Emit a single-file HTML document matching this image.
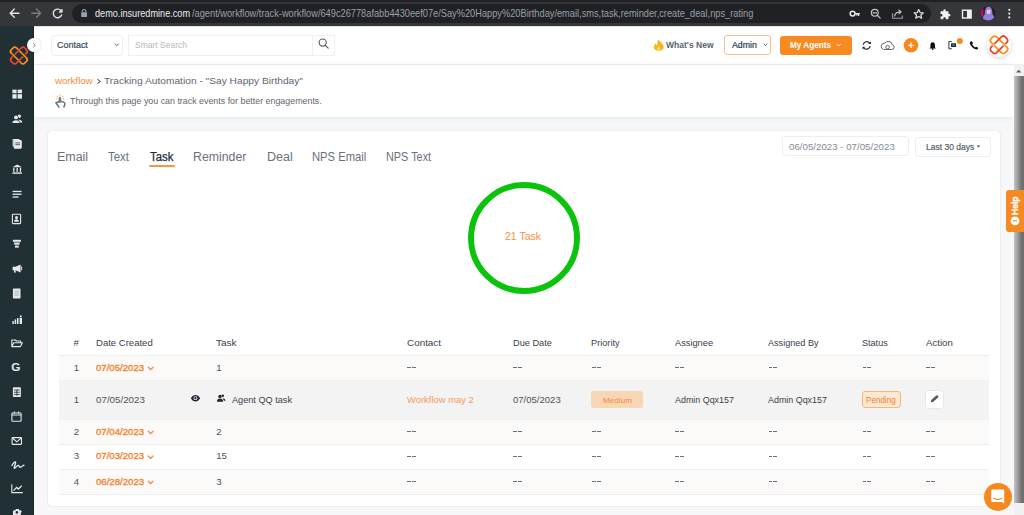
<!DOCTYPE html>
<html><head><meta charset="utf-8">
<style>
*{margin:0;padding:0;box-sizing:border-box}
html,body{width:1024px;height:515px;overflow:hidden;background:#f6f7f9;font-family:"Liberation Sans",sans-serif}
.a{position:absolute}
.t{position:absolute;white-space:nowrap;line-height:1;transform-origin:0 0;font-family:"Liberation Sans",sans-serif}
svg{position:absolute;overflow:visible}
</style></head><body>
<!-- browser chrome -->
<div class="a" style="left:0;top:0;width:1024px;height:26px;background:#35363a"></div>
<div class="a" style="left:0;top:0;width:1024px;height:2px;background:#202124"></div>
<div class="a" style="left:72px;top:4px;width:859px;height:19px;border-radius:10px;background:#202124"></div>
<!-- sidebar -->
<div class="a" style="left:0;top:26px;width:34px;height:489px;background:#213035"></div><div class="a" style="left:33px;top:26px;width:1px;height:489px;background:#182428"></div>
<!-- header -->
<div class="a" style="left:34px;top:26px;width:990px;height:39px;background:#fff;border-bottom:1px solid #eceef1"></div><div class="a" style="left:34px;top:26px;width:990px;height:1px;background:#e2e2e2"></div>
<!-- breadcrumb panel -->
<div class="a" style="left:34px;top:65px;width:980px;height:52px;background:#fff;box-shadow:0 1px 5px rgba(0,0,0,.07)"></div>
<!-- scrollbar -->
<div class="a" style="left:1014px;top:64px;width:10px;height:451px;background:#f1f1f1"></div>
<div class="a" style="left:1014px;top:76px;width:10px;height:427px;background:linear-gradient(to right,#c4c4c4,#9a9a9a 40%,#727272 75%,#6e6e6e)"></div>
<!-- card -->
<div class="a" style="left:47px;top:129.5px;width:953.5px;height:377px;background:#fff;border-radius:5px;border:1px solid #eeeff0"></div>
<!-- controls header -->
<div class="a" style="left:50.5px;top:35px;width:72.5px;height:20.5px;border:1px solid #edf0f3;border-radius:3px;background:#fff"></div>
<div class="a" style="left:128px;top:35px;width:185px;height:20.5px;border:1px solid #edf0f3;background:#fff"></div>
<div class="a" style="left:312px;top:35px;width:23px;height:20.5px;border:1px solid #edf0f3;background:#fff"></div>
<div class="a" style="left:724px;top:35px;width:47px;height:20px;border:1px solid #f9c08f;border-radius:3px;background:#fff"></div>
<div class="a" style="left:780px;top:36px;width:72px;height:19px;border-radius:3px;background:#f78b22"></div>
<!-- date controls -->
<div class="a" style="left:782px;top:136px;width:127px;height:20px;border:1px solid #eceef0;border-radius:3px"></div>
<div class="a" style="left:915px;top:137px;width:76px;height:20px;border:1px solid #eceef0;border-radius:3px"></div>
<!-- tab underline -->
<div class="a" style="left:149px;top:165px;width:26px;height:2px;background:#f59844;border-radius:1px"></div>
<!-- circle -->
<div class="a" style="left:468px;top:182px;width:112px;height:112px;border-radius:50%;border:6.8px solid #0bc30b"></div>
<!-- table -->
<div class="a" style="left:58.5px;top:355px;width:930px;height:1px;background:#eceef0"></div>
<div class="a" style="left:58.5px;top:356px;width:930px;height:24px;background:#fbfaf9"></div>
<div class="a" style="left:58.5px;top:380px;width:930px;height:1px;background:#eceef0"></div>
<div class="a" style="left:58.5px;top:381px;width:930px;height:38px;background:#f3f3f3"></div>
<div class="a" style="left:58.5px;top:419px;width:930px;height:1px;background:#eceef0"></div>
<div class="a" style="left:58.5px;top:420px;width:930px;height:24px;background:#fbfaf9"></div>
<div class="a" style="left:58.5px;top:444px;width:930px;height:1px;background:#eceef0"></div>
<div class="a" style="left:58.5px;top:469px;width:930px;height:1px;background:#eceef0"></div>
<div class="a" style="left:58.5px;top:470px;width:930px;height:24px;background:#fbfaf9"></div>
<div class="a" style="left:58.5px;top:494px;width:930px;height:1px;background:#eceef0"></div>
<!-- badges -->
<div class="a" style="left:591px;top:391px;width:52px;height:17px;border-radius:2.5px;background:#f7d6b5"></div>
<div class="a" style="left:862px;top:390.6px;width:39px;height:17.4px;border-radius:3px;background:#fde8d3;border:1px solid #f8b678"></div>
<div class="a" style="left:926px;top:391px;width:17px;height:17px;border-radius:2px;background:#fff;box-shadow:0 0 2px rgba(0,0,0,.15)"></div>
<!-- help tab -->
<div class="a" style="left:1006px;top:190px;width:18px;height:42px;border-radius:3px 0 0 3px;background:#f58a22"></div>
<!-- chat button -->
<div class="a" style="left:983.7px;top:482.5px;width:28.6px;height:28.6px;border-radius:50%;background:#f5891f"></div>
<div class="t" style="left:95.20px;top:8.00px;font-size:10.60px;color:#e8eaed;font-weight:400;transform:scaleX(0.8632);">demo.insuredmine.com</div>
<div class="t" style="left:191.60px;top:8.00px;font-size:10.60px;color:#9aa0a6;font-weight:400;transform:scaleX(0.8729);">/agent/workflow/track-workflow/649c26778afabb4430eef07e/Say%20Happy%20Birthday/email,sms,task,reminder,create_deal,nps_rating</div>
<div class="t" style="left:56.90px;top:42.00px;font-size:8.28px;color:#3d4b5c;font-weight:400;transform:scaleX(1.0826);-webkit-text-stroke:0.2px #3d4b5c;">Contact</div>
<div class="t" style="left:134.70px;top:42.00px;font-size:8.28px;color:#b8b8b8;font-weight:400;transform:scaleX(1.0308);">Smart Search</div>
<div class="t" style="left:665.60px;top:41.00px;font-size:8.43px;color:#5a626d;font-weight:700;transform:scaleX(1.0132);">What's New</div>
<div class="t" style="left:731.60px;top:41.00px;font-size:8.87px;color:#2c3a4a;font-weight:400;transform:scaleX(0.9927);-webkit-text-stroke:0.2px #2c3a4a;">Admin</div>
<div class="t" style="left:790.40px;top:41.00px;font-size:8.58px;color:#ffffff;font-weight:700;transform:scaleX(0.9510);">My Agents</div>
<div class="t" style="left:55.18px;top:76.00px;font-size:9.90px;color:#f58a3c;font-weight:400;transform:scaleX(0.9807);">workflow</div>
<div class="t" style="left:104.00px;top:76.00px;font-size:9.88px;color:#5d6570;font-weight:400;transform:scaleX(1.0323);">Tracking Automation - "Say Happy Birthday"</div>
<div class="t" style="left:69.60px;top:97.00px;font-size:8.58px;color:#5f6670;font-weight:400;transform:scaleX(1.0332);">Through this page you can track events for better engagements.</div>
<div class="t" style="left:56.78px;top:151.00px;font-size:12.21px;color:#6a7079;font-weight:400;transform:scaleX(1.0185);">Email</div>
<div class="t" style="left:108.20px;top:151.00px;font-size:12.21px;color:#6a7079;font-weight:400;transform:scaleX(0.9362);">Text</div>
<div class="t" style="left:150.00px;top:151.00px;font-size:12.21px;color:#1d2a3a;font-weight:400;transform:scaleX(0.9321);-webkit-text-stroke:0.25px #1d2a3a;">Task</div>
<div class="t" style="left:193.49px;top:151.00px;font-size:12.21px;color:#6a7079;font-weight:400;transform:scaleX(1.0102);">Reminder</div>
<div class="t" style="left:266.88px;top:151.00px;font-size:12.21px;color:#6a7079;font-weight:400;transform:scaleX(1.0232);">Deal</div>
<div class="t" style="left:311.78px;top:151.00px;font-size:12.21px;color:#6a7079;font-weight:400;transform:scaleX(0.9211);">NPS Email</div>
<div class="t" style="left:385.61px;top:151.00px;font-size:12.21px;color:#6a7079;font-weight:400;transform:scaleX(0.8907);">NPS Text</div>
<div class="t" style="left:789.00px;top:142.00px;font-size:9.88px;color:#858b93;font-weight:400;transform:scaleX(0.9831);">06/05/2023 - 07/05/2023</div>
<div class="t" style="left:925.70px;top:142.00px;font-size:9.88px;color:#555b63;font-weight:400;transform:scaleX(0.8616);-webkit-text-stroke:0.2px #555b63;">Last 30 days</div>
<div class="t" style="left:505.40px;top:231.00px;font-size:11.19px;color:#f5923e;font-weight:400;transform:scaleX(0.9394);">21 Task</div>
<div class="t" style="left:73.40px;top:338.00px;font-size:9.74px;color:#3b4148;font-weight:400;transform:scaleX(1.0000);">#</div>
<div class="t" style="left:95.70px;top:338.00px;font-size:9.74px;color:#3b4148;font-weight:400;transform:scaleX(0.9791);">Date Created</div>
<div class="t" style="left:216.30px;top:338.00px;font-size:9.74px;color:#3b4148;font-weight:400;transform:scaleX(1.0287);">Task</div>
<div class="t" style="left:406.70px;top:338.00px;font-size:9.74px;color:#3b4148;font-weight:400;transform:scaleX(1.0150);">Contact</div>
<div class="t" style="left:512.80px;top:338.00px;font-size:9.74px;color:#3b4148;font-weight:400;transform:scaleX(0.9446);">Due Date</div>
<div class="t" style="left:591.30px;top:338.00px;font-size:9.74px;color:#3b4148;font-weight:400;transform:scaleX(0.9447);">Priority</div>
<div class="t" style="left:674.60px;top:338.00px;font-size:9.74px;color:#3b4148;font-weight:400;transform:scaleX(0.9501);">Assignee</div>
<div class="t" style="left:768.40px;top:338.00px;font-size:9.74px;color:#3b4148;font-weight:400;transform:scaleX(0.9342);">Assigned By</div>
<div class="t" style="left:862.20px;top:338.00px;font-size:9.74px;color:#3b4148;font-weight:400;transform:scaleX(0.9316);">Status</div>
<div class="t" style="left:925.70px;top:338.00px;font-size:9.74px;color:#3b4148;font-weight:400;transform:scaleX(0.9885);">Action</div>
<div class="t" style="left:73.70px;top:363.00px;font-size:9.59px;color:#4a5058;font-weight:400;transform:scaleX(1.0000);">1</div>
<div class="t" style="left:95.90px;top:363.00px;font-size:9.88px;color:#f7822f;font-weight:400;transform:scaleX(0.9733);-webkit-text-stroke:0.35px #f7822f;">07/05/2023</div>
<div class="t" style="left:216.30px;top:363.00px;font-size:9.59px;color:#4a5058;font-weight:400;transform:scaleX(1.0000);">1</div>
<div class="t" style="left:73.70px;top:427.00px;font-size:9.59px;color:#4a5058;font-weight:400;transform:scaleX(1.0000);">2</div>
<div class="t" style="left:95.90px;top:427.00px;font-size:9.88px;color:#f7822f;font-weight:400;transform:scaleX(0.9733);-webkit-text-stroke:0.35px #f7822f;">07/04/2023</div>
<div class="t" style="left:216.30px;top:427.00px;font-size:9.59px;color:#4a5058;font-weight:400;transform:scaleX(1.0000);">2</div>
<div class="t" style="left:73.70px;top:451.00px;font-size:9.59px;color:#4a5058;font-weight:400;transform:scaleX(1.0000);">3</div>
<div class="t" style="left:95.90px;top:451.00px;font-size:9.88px;color:#f7822f;font-weight:400;transform:scaleX(0.9733);-webkit-text-stroke:0.35px #f7822f;">07/03/2023</div>
<div class="t" style="left:216.30px;top:451.00px;font-size:9.59px;color:#4a5058;font-weight:400;transform:scaleX(1.0000);">15</div>
<div class="t" style="left:73.70px;top:477.00px;font-size:9.59px;color:#4a5058;font-weight:400;transform:scaleX(1.0000);">4</div>
<div class="t" style="left:95.90px;top:477.00px;font-size:9.88px;color:#f7822f;font-weight:400;transform:scaleX(0.9733);-webkit-text-stroke:0.35px #f7822f;">06/28/2023</div>
<div class="t" style="left:216.30px;top:477.00px;font-size:9.59px;color:#4a5058;font-weight:400;transform:scaleX(1.0000);">3</div>
<div class="t" style="left:73.70px;top:395.00px;font-size:9.59px;color:#4a5058;font-weight:400;transform:scaleX(1.0000);">1</div>
<div class="t" style="left:95.90px;top:395.00px;font-size:9.59px;color:#4d545c;font-weight:400;transform:scaleX(1.0208);">07/05/2023</div>
<div class="t" style="left:231.80px;top:395.00px;font-size:9.59px;color:#3b4148;font-weight:400;transform:scaleX(0.9551);">Agent QQ task</div>
<div class="t" style="left:406.70px;top:395.00px;font-size:9.59px;color:#f59a5c;font-weight:400;transform:scaleX(0.9834);">Workflow may 2</div>
<div class="t" style="left:512.80px;top:395.00px;font-size:9.88px;color:#4d545c;font-weight:400;transform:scaleX(0.9653);">07/05/2023</div>
<div class="t" style="left:674.60px;top:395.00px;font-size:9.59px;color:#3b4148;font-weight:400;transform:scaleX(0.9297);">Admin Qqx157</div>
<div class="t" style="left:768.40px;top:395.00px;font-size:9.59px;color:#3b4148;font-weight:400;transform:scaleX(0.9297);">Admin Qqx157</div>
<div class="t" style="left:602.60px;top:397.00px;font-size:7.40px;color:#f2873a;font-weight:400;transform:scaleX(1.1060);">Medium</div>
<div class="t" style="left:866.20px;top:397.00px;font-size:8.20px;color:#f2812c;font-weight:400;transform:scaleX(0.9871);">Pending</div>
<div class="a" style="left:407.2px;top:367.4px;width:3.8px;height:1.1px;background:#6b7178"></div><div class="a" style="left:412.1px;top:367.4px;width:3.8px;height:1.1px;background:#6b7178"></div>
<div class="a" style="left:513.0px;top:367.4px;width:3.8px;height:1.1px;background:#6b7178"></div><div class="a" style="left:517.9px;top:367.4px;width:3.8px;height:1.1px;background:#6b7178"></div>
<div class="a" style="left:592.0px;top:367.4px;width:3.8px;height:1.1px;background:#6b7178"></div><div class="a" style="left:596.9px;top:367.4px;width:3.8px;height:1.1px;background:#6b7178"></div>
<div class="a" style="left:675.0px;top:367.4px;width:3.8px;height:1.1px;background:#6b7178"></div><div class="a" style="left:679.9px;top:367.4px;width:3.8px;height:1.1px;background:#6b7178"></div>
<div class="a" style="left:768.5px;top:367.4px;width:3.8px;height:1.1px;background:#6b7178"></div><div class="a" style="left:773.4px;top:367.4px;width:3.8px;height:1.1px;background:#6b7178"></div>
<div class="a" style="left:862.5px;top:367.4px;width:3.8px;height:1.1px;background:#6b7178"></div><div class="a" style="left:867.4px;top:367.4px;width:3.8px;height:1.1px;background:#6b7178"></div>
<div class="a" style="left:926.0px;top:367.4px;width:3.8px;height:1.1px;background:#6b7178"></div><div class="a" style="left:930.9px;top:367.4px;width:3.8px;height:1.1px;background:#6b7178"></div>
<div class="a" style="left:407.2px;top:431.1px;width:3.8px;height:1.1px;background:#6b7178"></div><div class="a" style="left:412.1px;top:431.1px;width:3.8px;height:1.1px;background:#6b7178"></div>
<div class="a" style="left:513.0px;top:431.1px;width:3.8px;height:1.1px;background:#6b7178"></div><div class="a" style="left:517.9px;top:431.1px;width:3.8px;height:1.1px;background:#6b7178"></div>
<div class="a" style="left:592.0px;top:431.1px;width:3.8px;height:1.1px;background:#6b7178"></div><div class="a" style="left:596.9px;top:431.1px;width:3.8px;height:1.1px;background:#6b7178"></div>
<div class="a" style="left:675.0px;top:431.1px;width:3.8px;height:1.1px;background:#6b7178"></div><div class="a" style="left:679.9px;top:431.1px;width:3.8px;height:1.1px;background:#6b7178"></div>
<div class="a" style="left:768.5px;top:431.1px;width:3.8px;height:1.1px;background:#6b7178"></div><div class="a" style="left:773.4px;top:431.1px;width:3.8px;height:1.1px;background:#6b7178"></div>
<div class="a" style="left:862.5px;top:431.1px;width:3.8px;height:1.1px;background:#6b7178"></div><div class="a" style="left:867.4px;top:431.1px;width:3.8px;height:1.1px;background:#6b7178"></div>
<div class="a" style="left:926.0px;top:431.1px;width:3.8px;height:1.1px;background:#6b7178"></div><div class="a" style="left:930.9px;top:431.1px;width:3.8px;height:1.1px;background:#6b7178"></div>
<div class="a" style="left:407.2px;top:455.9px;width:3.8px;height:1.1px;background:#6b7178"></div><div class="a" style="left:412.1px;top:455.9px;width:3.8px;height:1.1px;background:#6b7178"></div>
<div class="a" style="left:513.0px;top:455.9px;width:3.8px;height:1.1px;background:#6b7178"></div><div class="a" style="left:517.9px;top:455.9px;width:3.8px;height:1.1px;background:#6b7178"></div>
<div class="a" style="left:592.0px;top:455.9px;width:3.8px;height:1.1px;background:#6b7178"></div><div class="a" style="left:596.9px;top:455.9px;width:3.8px;height:1.1px;background:#6b7178"></div>
<div class="a" style="left:675.0px;top:455.9px;width:3.8px;height:1.1px;background:#6b7178"></div><div class="a" style="left:679.9px;top:455.9px;width:3.8px;height:1.1px;background:#6b7178"></div>
<div class="a" style="left:768.5px;top:455.9px;width:3.8px;height:1.1px;background:#6b7178"></div><div class="a" style="left:773.4px;top:455.9px;width:3.8px;height:1.1px;background:#6b7178"></div>
<div class="a" style="left:862.5px;top:455.9px;width:3.8px;height:1.1px;background:#6b7178"></div><div class="a" style="left:867.4px;top:455.9px;width:3.8px;height:1.1px;background:#6b7178"></div>
<div class="a" style="left:926.0px;top:455.9px;width:3.8px;height:1.1px;background:#6b7178"></div><div class="a" style="left:930.9px;top:455.9px;width:3.8px;height:1.1px;background:#6b7178"></div>
<div class="a" style="left:407.2px;top:481.1px;width:3.8px;height:1.1px;background:#6b7178"></div><div class="a" style="left:412.1px;top:481.1px;width:3.8px;height:1.1px;background:#6b7178"></div>
<div class="a" style="left:513.0px;top:481.1px;width:3.8px;height:1.1px;background:#6b7178"></div><div class="a" style="left:517.9px;top:481.1px;width:3.8px;height:1.1px;background:#6b7178"></div>
<div class="a" style="left:592.0px;top:481.1px;width:3.8px;height:1.1px;background:#6b7178"></div><div class="a" style="left:596.9px;top:481.1px;width:3.8px;height:1.1px;background:#6b7178"></div>
<div class="a" style="left:675.0px;top:481.1px;width:3.8px;height:1.1px;background:#6b7178"></div><div class="a" style="left:679.9px;top:481.1px;width:3.8px;height:1.1px;background:#6b7178"></div>
<div class="a" style="left:768.5px;top:481.1px;width:3.8px;height:1.1px;background:#6b7178"></div><div class="a" style="left:773.4px;top:481.1px;width:3.8px;height:1.1px;background:#6b7178"></div>
<div class="a" style="left:862.5px;top:481.1px;width:3.8px;height:1.1px;background:#6b7178"></div><div class="a" style="left:867.4px;top:481.1px;width:3.8px;height:1.1px;background:#6b7178"></div>
<div class="a" style="left:926.0px;top:481.1px;width:3.8px;height:1.1px;background:#6b7178"></div><div class="a" style="left:930.9px;top:481.1px;width:3.8px;height:1.1px;background:#6b7178"></div>
<!-- sidebar icons -->
<svg style="left:0;top:80px" width="34" height="435" viewBox="0 80 34 435">
 <g fill="#e6e8ea">
  <!-- dashboard -->
  <rect x="12.4" y="89.6" width="4.2" height="3.6"/><rect x="17.6" y="89.6" width="4.4" height="3.6"/>
  <rect x="12.4" y="94.2" width="4.2" height="4.4"/><rect x="17.6" y="94.2" width="4.4" height="4.4"/>
  <!-- users -->
  <circle cx="19.3" cy="116.2" r="1.7"/><path d="M17.6 122.4V119.8C20.6 119.4 22.2 120.4 22.2 122.4Z"/>
  <circle cx="16" cy="117.4" r="2.5" fill="#213035"/><circle cx="16" cy="117.4" r="2"/>
  <path d="M11.8 123.4C11.8 120.6 13.6 119.6 16 119.6C18.4 119.6 20.2 120.6 20.2 123.4Z" fill="#213035"/>
  <path d="M12.4 123C12.4 121 13.8 120.2 16 120.2C18.2 120.2 19.6 121 19.6 123Z"/>
  <!-- bank -->
  <path d="M17.2 164.6L22 167.2H12.4Z"/><rect x="12.4" y="172.4" width="9.6" height="1.4"/>
  <rect x="13.2" y="167.9" width="1.3" height="4"/><rect x="16.5" y="167.9" width="1.3" height="4"/><rect x="19.8" y="167.9" width="1.3" height="4"/>
  <!-- list -->
  <rect x="12.6" y="190.8" width="8.9" height="1.3"/><rect x="12.6" y="193.6" width="8.9" height="1.3"/><rect x="12.6" y="196.4" width="6" height="1.3"/>
  <!-- funnel -->
  <circle cx="16.5" cy="217.4" r="1.5"/><path d="M14 221.8C14 220 15 219.2 16.5 219.2C18 219.2 19 220 19 221.8Z"/><rect x="12.9" y="239.8" width="8" height="2"/><path d="M13.8 242.6H20L19.2 244.8H14.6Z"/><rect x="15" y="245.6" width="3.8" height="2"/>
  <!-- megaphone -->
  <path d="M12.6 266.8H15.4L20.6 264.4V272.4L15.4 270.2H12.6Z"/><rect x="14" y="270" width="1.6" height="2.6"/><rect x="21.2" y="266.4" width="0.9" height="4"/>
  <!-- document -->
  <rect x="12.9" y="288.6" width="7.6" height="9.8" rx="0.6"/>
  <!-- chart person -->
  <rect x="12.4" y="321" width="1.5" height="3"/><rect x="14.7" y="319.4" width="1.5" height="4.6"/><rect x="17" y="318" width="1.5" height="6"/>
  <circle cx="20.8" cy="316.2" r="1"/><path d="M19.6 317.8H22V324H19.6Z"/>
  <!-- G -->
  <!-- calc -->
  <rect x="12.9" y="387.2" width="8" height="9.8" rx="0.8"/>
  <!-- gear -->
  <path d="M15.8 509H18.8L19.2 510.6L20.6 510L21.7 511.6L20.8 513V515H13V513L12.9 511.6L14 510L15.4 510.6Z"/>
 </g>
 <g fill="none" stroke="#e6e8ea" stroke-width="1.1">
  <!-- copy -->
  <rect x="14.2" y="140.6" width="7" height="7.6" rx="0.6" fill="#e6e8ea"/>
  <path d="M13.2 146.6V139.6H19.4"/>
  <!-- contact card -->
  <rect x="12.4" y="214.2" width="8.2" height="9.4" rx="0.8"/>
  <!-- folder -->
  <path d="M11.8 346.6V340H15.4L16.4 341H20.6V342.8M11.8 346.6L13.8 342.8H22.4L20.4 346.6Z" stroke-linejoin="round"/>
  <!-- calendar -->
  <rect x="11.9" y="413" width="9.2" height="8.2" rx="0.8"/><path d="M14.4 411.4V413.6M18.6 411.4V413.6M11.9 415H21.1"/>
  <!-- mail -->
  <rect x="12.1" y="437.6" width="9.4" height="6.8" rx="0.6"/><path d="M12.4 438L16.8 441.8L21.2 438"/>
  <!-- signature -->
  <path d="M12 465.6C13 463.2 15.4 461 15.6 462.4C15.8 464.2 13.2 468.6 14.6 468.2C16.2 467.6 17 465 18.4 465.4C19.6 465.8 19 467.6 20.4 467.2C21.8 466.8 23 465.6 24 465.2" stroke-width="1.3" stroke-linecap="round"/>
  <!-- line chart -->
  <path d="M11.8 484.2V492.6H22.8" /><path d="M13.6 490.6L16.6 487.4L18.4 489L21.8 485.6" stroke-width="1.3"/>
 </g>
 <g fill="#213035">
  <g fill="#9ea4a8"><rect x="14.4" y="290.8" width="4.6" height="0.7"/><rect x="14.4" y="292.8" width="4.6" height="0.7"/><rect x="14.4" y="294.8" width="4.6" height="0.7"/></g>
  <rect x="14" y="389.6" width="5.8" height="0.8"/><rect x="14" y="391.8" width="5.8" height="0.8"/><rect x="14" y="394" width="5.8" height="0.8"/><rect x="16.5" y="389.6" width="0.8" height="6.2"/>
  <rect x="15.4" y="142.6" width="4.6" height="0.7"/><rect x="15.4" y="144.4" width="4.6" height="0.7"/>
  <circle cx="16.9" cy="512.4" r="1.3"/>
 </g>
</svg>

<!-- chrome icons -->
<svg style="left:0;top:0" width="1024" height="26" viewBox="0 0 1024 26">
 <g fill="none" stroke="#e3e3e3" stroke-width="1.4" stroke-linecap="round" stroke-linejoin="round">
  <path d="M19 13.2H10.2M14.3 9.1L10.2 13.2L14.3 17.3"/>
 </g>
 <g fill="none" stroke="#7c7d80" stroke-width="1.4" stroke-linecap="round" stroke-linejoin="round">
  <path d="M31.8 13.2H40.6M36.5 9.1L40.6 13.2L36.5 17.3"/>
 </g>
 <path d="M61.3 11.2A4.3 4.3 0 1 0 61.6 15" fill="none" stroke="#e3e3e3" stroke-width="1.4" stroke-linecap="round"/>
 <path d="M62.2 9.2V12.3H59.1Z" fill="#e3e3e3" stroke="#e3e3e3" stroke-width="0.8" stroke-linejoin="round"/>
 <rect x="81.2" y="12.3" width="5.8" height="4.8" rx="0.6" fill="#9aa0a6"/>
 <path d="M82.4 12.4V11.2A1.7 1.7 0 0 1 85.8 11.2V12.4" fill="none" stroke="#9aa0a6" stroke-width="1.1"/>
 <!-- key -->
 <circle cx="852.6" cy="13.6" r="2.4" fill="none" stroke="#e3e3e3" stroke-width="1.6"/>
 <path d="M855 13.6H859.8M858.6 13.6V16M856.8 13.6V15.4" stroke="#e3e3e3" stroke-width="1.4" fill="none"/>
 <!-- zoom -->
 <circle cx="874.8" cy="12.8" r="3.4" fill="none" stroke="#c4c7c5" stroke-width="1.2"/>
 <path d="M873 12.8H876.6M877.3 15.3L880.2 18.1" stroke="#c4c7c5" stroke-width="1.2" fill="none" stroke-linecap="round"/>
 <!-- share -->
 <path d="M892.6 13.2V18.2H902.3V15.6" fill="none" stroke="#9aa0a6" stroke-width="1.1"/>
 <path d="M894.6 16.4C895 13.4 897 11.9 900.2 11.9M898.6 9.8L901.2 11.9L898.6 14.1" fill="none" stroke="#c4c7c5" stroke-width="1.1" stroke-linejoin="round"/>
 <!-- star -->
 <path d="M918.7 9.6L920.1 12.6L923.3 12.9L920.9 15L921.6 18.1L918.7 16.5L915.8 18.1L916.5 15L914.1 12.9L917.3 12.6Z" fill="none" stroke="#e3e3e3" stroke-width="1.2" stroke-linejoin="round"/>
 <!-- puzzle -->
 <path transform="translate(939.6 8.8) scale(0.47)" d="M20.5 11H19V7c0-1.1-.9-2-2-2h-4V3.5C13 2.12 11.88 1 10.5 1S8 2.12 8 3.5V5H4c-1.1 0-1.99.9-1.99 2v3.8H3.5c1.49 0 2.7 1.21 2.7 2.7s-1.21 2.7-2.7 2.7H2V20c0 1.1.9 2 2 2h3.8v-1.5c0-1.490 1.21-2.7 2.7-2.7 1.49 0 2.7 1.21 2.7 2.7V22H17c1.1 0 2-.9 2-2v-4h1.5c1.38 0 2.5-1.12 2.5-2.5S21.88 11 20.5 11z" fill="#f1f1f1"/>
 <!-- sidebar toggle -->
 <rect x="962.5" y="10.2" width="8.6" height="7.8" fill="none" stroke="#f1f1f1" stroke-width="1.4"/>
 <rect x="967" y="10.2" width="4.1" height="7.8" fill="#f1f1f1"/>
 <!-- avatar -->
 <clipPath id="av"><circle cx="988.2" cy="13.4" r="7.2"/></clipPath>
 <g clip-path="url(#av)">
  <rect x="980" y="5" width="17" height="17" fill="#2b1c26"/>
  <rect x="980" y="9" width="3.4" height="8" fill="#c4115a"/>
  <path d="M982.6 22C982.6 17 983.8 15.6 984.8 14.6C984.6 10 986 6.6 988.6 6.4C991.4 6.6 992.6 10 992.4 14.6C993.6 15.6 994.8 17 994.8 22Z" fill="#8b84e0"/>
  <ellipse cx="988.6" cy="11.8" rx="2" ry="2.4" fill="#eccbc6"/>
 </g>
 <!-- dots -->
 <circle cx="1009.3" cy="9.8" r="1.1" fill="#e3e3e3"/><circle cx="1009.3" cy="13.6" r="1.1" fill="#e3e3e3"/><circle cx="1009.3" cy="17.4" r="1.1" fill="#e3e3e3"/>
</svg>
<!-- sidebar logo -->
<svg style="left:0;top:30px" width="34" height="45" viewBox="0 30 34 45"><g transform="translate(18.9 55.5)" fill="none"><rect x="-9.50" y="-3.70" width="19.00" height="7.40" rx="2.60" transform="rotate(45)" stroke="#f39321" stroke-width="1.75"/><rect x="-9.50" y="-3.70" width="19.00" height="7.40" rx="2.60" transform="rotate(-45)" stroke="#e8462f" stroke-width="1.75"/><path d="M3.73 -1.50L6.73 1.50" stroke="#213035" stroke-width="2.6"/><path d="M3.73 -1.50L6.73 1.50" stroke="#f39321" stroke-width="1.75"/><path d="M-6.73 -1.50L-3.73 1.50" stroke="#213035" stroke-width="2.6"/><path d="M-6.73 -1.50L-3.73 1.50" stroke="#f39321" stroke-width="1.75"/></g></svg>
<!-- collapse btn -->
<div class="a" style="left:27px;top:38.3px;width:14px;height:14px;border-radius:50%;background:#fff;box-shadow:0 0 1.5px rgba(0,0,0,.25)"></div>
<svg style="left:0;top:0" width="60" height="60" viewBox="0 0 60 60"><path d="M33.4 43.3L35.4 45.3L33.4 47.3" fill="none" stroke="#6b7f9a" stroke-width="0.9" stroke-linecap="round"/></svg>
<!-- header icons -->
<svg style="left:0;top:26px" width="1024" height="40" viewBox="0 26 1024 40">
 <path d="M114.8 43.5L116.8 45.6L118.8 43.5" fill="none" stroke="#505862" stroke-width="0.9"/>
 <circle cx="322.7" cy="42.6" r="3.6" fill="none" stroke="#555" stroke-width="1.1"/>
 <path d="M325.3 45.3L328.2 48.2" stroke="#555" stroke-width="1.2" stroke-linecap="round"/>
 <path d="M763.6 43.7L765.5 45.6L767.4 43.7" fill="none" stroke="#505862" stroke-width="0.9"/>
 <path d="M836.9 44.2L838.7 46L840.5 44.2" fill="none" stroke="#fff" stroke-width="1"/>
 <!-- flame -->
 <path d="M658.2 39.6C659.5 41.6 662.6 43 663.6 46.2C664.2 49 662 50.8 658.8 50.8C655.5 50.8 653.6 49 653.8 46.6C654 44.8 655.2 44.2 655.6 43.2C656.2 44.6 656.8 45.2 657.2 45.2C657.6 43.4 657.2 41.2 658.2 39.6Z" fill="#fbb41c"/>
 <path d="M658.8 46C659.8 47 661 48 660.6 49.4C660.2 50.4 657.6 50.6 657 49.6C656.4 48.4 657.8 47.2 658.8 46Z" fill="#fdd66b"/>
 <!-- sync -->
 <path d="M863.2 44.8A3.6 3.6 0 0 1 869.6 43" fill="none" stroke="#1c2b3a" stroke-width="1.2"/>
 <path d="M870.2 46.1A3.6 3.6 0 0 1 863.8 47.8" fill="none" stroke="#1c2b3a" stroke-width="1.2"/>
 <path d="M870.9 41.2V44.1H868Z" fill="#1c2b3a"/>
 <path d="M862.5 49.6V46.7H865.4Z" fill="#1c2b3a"/>
 <!-- cloud -->
 <path d="M883.6 49.5H891.8A2.4 2.4 0 0 0 892.4 44.8A4.4 4.4 0 0 0 884.6 43.2A3.2 3.2 0 0 0 883.6 49.5Z" fill="none" stroke="#555" stroke-width="0.9"/>
 <circle cx="887.6" cy="47.2" r="1.8" fill="none" stroke="#555" stroke-width="0.9"/>
 <!-- plus -->
 <circle cx="911" cy="45.3" r="7.3" fill="#f5891f"/>
 <path d="M911 42.6V48M908.3 45.3H913.7" stroke="#fff" stroke-width="1.3"/>
 <!-- bell -->
 <path d="M932.7 42.2C930.9 42.2 930.4 43.8 930.4 45.4V47.4L929.4 48.4H936L935 47.4V45.4C935 43.8 934.5 42.2 932.7 42.2Z" fill="#111"/>
 <circle cx="932.7" cy="49.1" r="0.9" fill="#111"/>
 <!-- mobile -->
 <path d="M951.8 41.6H948.9V48.8H951.8" fill="none" stroke="#333a44" stroke-width="1"/>
 <rect x="951" y="43.2" width="5.1" height="3.7" rx="0.6" fill="#1b2736"/>
 <rect x="952.3" y="44.5" width="2.5" height="1" fill="#fff" opacity=".6"/>
 <circle cx="959.8" cy="41.1" r="3" fill="#f5891f"/>
 <!-- phone -->
 <path d="M970.6 41.6C971.2 41 972 41.2 972.3 41.8L972.8 43C973 43.6 972.6 44 972.2 44.3C972.8 45.6 973.9 46.8 975.2 47.5C975.6 47 976 46.7 976.6 46.9L977.7 47.5C978.2 47.8 978.3 48.5 977.8 49C977 49.6 976 49.6 975 49.1C972.9 48.1 970.9 46 970 43.9C969.7 43 969.9 42.2 970.6 41.6Z" fill="#111"/>
</svg>
<!-- header logo -->
<div class="a" style="left:987px;top:33px;width:24px;height:24px;border-radius:50%;background:#fff;box-shadow:0 1px 4px rgba(0,0,0,.18)"></div>
<svg style="left:980px;top:28px" width="40" height="40" viewBox="980 28 40 40"><g transform="translate(999 44.8)" fill="none"><rect x="-9.97" y="-3.89" width="19.95" height="7.77" rx="2.73" transform="rotate(45)" stroke="#f39321" stroke-width="1.84"/><rect x="-9.97" y="-3.89" width="19.95" height="7.77" rx="2.73" transform="rotate(-45)" stroke="#e8462f" stroke-width="1.84"/><path d="M3.92 -1.58L7.07 1.58" stroke="#ffffff" stroke-width="2.7"/><path d="M3.92 -1.58L7.07 1.58" stroke="#f39321" stroke-width="1.84"/><path d="M-7.07 -1.58L-3.92 1.58" stroke="#ffffff" stroke-width="2.7"/><path d="M-7.07 -1.58L-3.92 1.58" stroke="#f39321" stroke-width="1.84"/></g></svg>
<!-- hand icon -->
<svg style="left:50px;top:90px" width="20" height="22" viewBox="50 90 20 22">
 <g fill="#fbb98a"><circle cx="57.3" cy="96.4" r="0.8"/><circle cx="60.1" cy="95.3" r="0.8"/><circle cx="62.8" cy="96.4" r="0.8"/><circle cx="56.4" cy="98.8" r="0.8"/><circle cx="63.4" cy="98.8" r="0.8"/></g>
 <path d="M59.9 98V101.6" stroke="#7a808c" stroke-width="2.6" stroke-linecap="round"/>
 <path d="M59.2 101.8L55.9 102.8L58.9 107.1" fill="none" stroke="#6a717d" stroke-width="1.5" stroke-linecap="round" stroke-linejoin="round"/>
 <path d="M61 101.4C63 101.4 65 102.2 64.9 104L63.9 107.1" fill="none" stroke="#6a717d" stroke-width="1.5" stroke-linecap="round"/>
</svg>
<!-- caret last 30 days -->
<svg style="left:0;top:0" width="1024" height="515" viewBox="0 0 1024 515">
 <path d="M976.6 145.4H980.4L978.5 147.4Z" fill="#555"/>
 <path d="M1016 72.6H1021.4L1018.7 69.8Z" fill="#5a5a5a"/>
 <path d="M97.4 79.2L100.2 81.4L97.4 83.6" fill="none" stroke="#5f6670" stroke-width="1.1"/>
 <!-- date chevrons -->
 <g fill="none" stroke="#f58a3c" stroke-width="1.3" stroke-linecap="round">
  <path d="M148.2 367.3L150.6 369.7L153 367.3"/>
  <path d="M148.2 431.2L150.6 433.6L153 431.2"/>
  <path d="M148.2 456L150.6 458.4L153 456"/>
  <path d="M148.2 481.1L150.6 483.5L153 481.1"/>
 </g>
 <!-- eye -->
 <path d="M190.9 398.2C192.2 396 193.8 395 195.5 395C197.2 395 198.8 396 200.1 398.2C198.8 400.4 197.2 401.4 195.5 401.4C193.8 401.4 192.2 400.4 190.9 398.2Z" fill="#1b2530"/>
 <circle cx="195.5" cy="398.2" r="1.9" fill="#f4f4f4"/>
 <circle cx="195.5" cy="398.2" r="1.1" fill="#1b2530"/>
 <!-- users -->
 <circle cx="220" cy="396.4" r="1.7" fill="#1b2530"/>
 <path d="M216.9 401.8C216.9 399.6 218.2 398.6 220 398.6C221.8 398.6 223 399.6 223 401.8Z" fill="#1b2530"/>
 <circle cx="222.8" cy="395.8" r="1.2" fill="#1b2530"/>
 <path d="M222.6 398.2C224.6 398.2 225.4 399.2 225.4 400.8H223.8C223.6 399.8 223.2 399 222.6 398.2Z" fill="#1b2530"/>
 <!-- pencil -->
 <path d="M930.6 402.2L931.25 399.9L936.25 395.6A1.3 1.3 0 0 1 937.95 397.6L932.95 401.9Z" fill="#505863"/>
 <!-- info icon help -->
 <circle cx="1015" cy="220.8" r="4.4" fill="#fff"/>
 <path d="M1013 220.8H1017" stroke="#f58a22" stroke-width="1.1"/>
 <!-- chat -->
 <path d="M992.2 489.6H1003.2A1 1 0 0 1 1004.2 490.6V503.6L1001.6 502H992.2A1 1 0 0 1 991.2 501V490.6A1 1 0 0 1 992.2 489.6Z" fill="#fff"/>
 <path d="M993.8 498.2C996.2 499.8 999.2 499.8 1001.6 498.2" fill="none" stroke="#f5891f" stroke-width="1.2" stroke-linecap="round"/>
</svg>
<div class="t" style="left:11.2px;top:362.2px;font-size:11.8px;font-weight:700;color:#e6e8ea">G</div>
<!-- help text -->
<div class="t" style="left:1011px;top:215px;font-size:8.6px;font-weight:700;color:#fff;-webkit-text-stroke:0.3px #fff;transform:rotate(-90deg);transform-origin:0 0">Help</div>

</body></html>
